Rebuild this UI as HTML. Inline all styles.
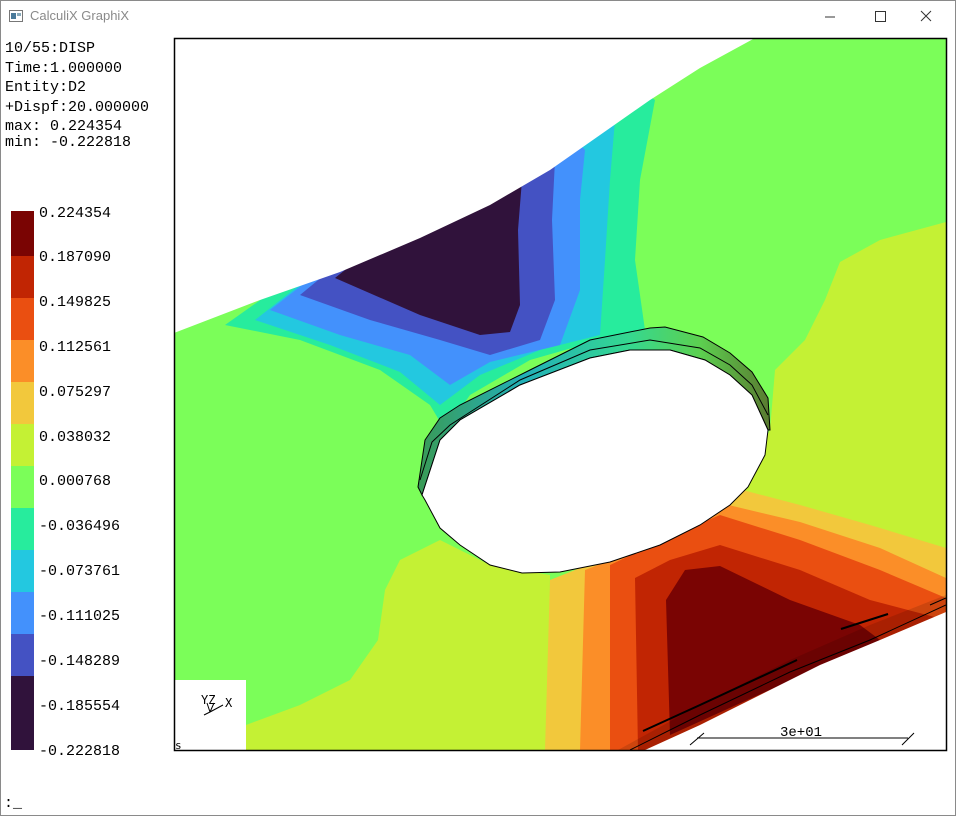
<!DOCTYPE html>
<html><head><meta charset="utf-8"><style>
html,body{margin:0;padding:0;background:#fff;}
body{width:956px;height:816px;position:relative;overflow:hidden;font-family:"Liberation Mono",monospace;}
.win{position:absolute;left:0;top:0;width:954px;height:814px;border:1px solid #8a8a8a;}
.title{position:absolute;left:30px;top:8px;font:13px "Liberation Sans",sans-serif;color:#8a8a8a;}
.t{position:absolute;font-size:15px;color:#000;white-space:pre;line-height:15px;}
</style></head><body>
<div class="win"></div>
<svg style="position:absolute;left:9px;top:10px" width="14" height="12"><rect x="0.5" y="0.5" width="13" height="11" fill="#fff" stroke="#777"/><rect x="2" y="3" width="5" height="6" fill="#4a7a9a"/><rect x="8" y="3" width="4" height="3" fill="#8ab"/></svg>
<div class="title">CalculiX GraphiX</div>
<svg style="position:absolute;left:820px;top:8px" width="120" height="18">
<line x1="5" y1="9" x2="15" y2="9" stroke="#333"/>
<rect x="55.5" y="3.5" width="10" height="10" fill="none" stroke="#333"/>
<path d="M101 3 L111 13 M111 3 L101 13" stroke="#333"/>
</svg>
<div class="t" style="left:5px;top:41px">10/55:DISP</div>
<div class="t" style="left:5px;top:61px">Time:1.000000</div>
<div class="t" style="left:5px;top:80px">Entity:D2</div>
<div class="t" style="left:5px;top:100px">+Dispf:20.000000</div>
<div class="t" style="left:5px;top:119px">max: 0.224354</div>
<div class="t" style="left:5px;top:135px">min: -0.222818</div>

<svg style="position:absolute;left:0;top:0" width="956" height="816">
<g>
<rect x="11" y="211" width="23" height="45" fill="#7a0403"/>
<rect x="11" y="256" width="23" height="42" fill="#c12503"/>
<rect x="11" y="298" width="23" height="42" fill="#ea4f11"/>
<rect x="11" y="340" width="23" height="42" fill="#fb8e28"/>
<rect x="11" y="382" width="23" height="42" fill="#f2c83c"/>
<rect x="11" y="424" width="23" height="42" fill="#c4f134"/>
<rect x="11" y="466" width="23" height="42" fill="#7bfe59"/>
<rect x="11" y="508" width="23" height="42" fill="#27ec9d"/>
<rect x="11" y="550" width="23" height="42" fill="#23c8e0"/>
<rect x="11" y="592" width="23" height="42" fill="#4391fc"/>
<rect x="11" y="634" width="23" height="42" fill="#4452c3"/>
<rect x="11" y="676" width="23" height="74" fill="#30123b"/>
</g>
<svg x="174" y="38" width="772" height="712" viewBox="174 38 772 712">
<rect x="174" y="38" width="772" height="712" fill="#7bfe59"/>
<path d="M946,222 L880,240 840,262 825,300 805,340 775,370 770,430 745,478 720,520 946,620 Z" fill="#c4f134"/>
<path d="M246,750 L246,725 300,705 350,680 378,640 385,590 400,560 440,540 490,565 550,575 548,750 Z" fill="#c4f134"/>
<path d="M225,325 L300,340 380,370 430,405 445,430 470,395 530,360 600,340 645,330 635,260 640,180 655,100 600,60 Z" fill="#27ec9d"/>
<path d="M255,320 L330,345 400,372 440,405 480,375 540,350 600,335 605,260 610,180 615,120 560,80 Z" fill="#23c8e0"/>
<path d="M270,310 L340,335 410,355 450,385 490,362 560,345 580,290 580,200 585,150 540,100 Z" fill="#4391fc"/>
<path d="M300,295 L370,320 440,340 490,355 540,340 555,300 552,220 555,160 500,130 Z" fill="#4452c3"/>
<path d="M335,278 L420,315 480,335 510,332 520,305 518,230 522,180 470,170 Z" fill="#30123b"/>
<path d="M174,38 L755,38 700,68 650,100 600,135 550,170 490,205 420,238 340,272 260,300 174,333 Z" fill="#fff"/>
<path d="M545,750 L550,580 600,560 680,520 735,488 800,505 870,525 946,548 946,750 Z" fill="#f2c83c"/>
<path d="M580,750 L585,570 650,545 720,503 800,522 880,548 946,578 946,750 Z" fill="#fb8e28"/>
<path d="M610,750 L610,565 680,532 720,515 800,540 880,570 946,598 946,750 Z" fill="#ea4f11"/>
<path d="M638,750 L635,578 670,560 720,545 800,570 870,600 946,620 946,750 Z" fill="#c12503"/>
<path d="M670,735 L666,600 685,570 720,566 790,600 860,625 880,640 Z" fill="#7a0403"/>
<path d="M618,750 L700,705 790,660 870,625 946,595 946,612 880,640 820,665 760,695 700,725 645,750 Z" fill="#000" opacity="0.12"/>
<path d="M645,750 L700,725 760,695 820,665 880,640 946,612 946,750 Z" fill="#fff"/>
<path d="M630,750 L700,715 790,672 870,640 946,605" fill="none" stroke="#000" stroke-width="1"/>
<path d="M643,731 L700,705 797,660" fill="none" stroke="#000" stroke-width="2"/>
<path d="M841,629 L888,614" fill="none" stroke="#000" stroke-width="2"/>
<path d="M946,598 L930,605" stroke="#000"/>
<defs><linearGradient id="rim" x1="0" x2="1" y1="0" y2="0"><stop offset="0" stop-color="#3a9a55"/><stop offset="0.3" stop-color="#22b0b8"/><stop offset="0.6" stop-color="#35d890"/><stop offset="0.8" stop-color="#5cd050"/><stop offset="1" stop-color="#5a7a30"/></linearGradient></defs>
<path d="M418,487 L425,440 440,418 460,405 530,370 590,340 650,328 665,327 703,337 730,353 752,372 768,398 770,430 768,430 752,395 730,375 705,360 670,350 630,350 590,358 520,385 460,420 440,440 422,495 Z" fill="url(#rim)" stroke="#000" stroke-width="1"/>
<path d="M420,480 L432,442 450,425 520,380 590,350 650,340 700,348 730,365 752,385 768,415" fill="none" stroke="#000" stroke-width="1"/>
<path d="M422,495 L440,440 460,420 520,385 590,358 630,350 670,350 705,360 730,375 752,395 768,430 765,455 748,487 730,505 700,525 660,545 610,562 560,572 522,573 490,565 460,545 440,528 425,500 Z" fill="#fff" stroke="#000" stroke-width="1"/>
<rect x="174" y="680" width="72" height="70" fill="#fff"/>
<path d="M210,712 L207,703 M210,712 L214,703 M210,712 L223,705 M204,715 L210,712" stroke="#000" fill="none"/>
<text x="201" y="704" font-size="12" font-family="DejaVu Sans Mono,monospace">YZ</text>
<text x="225" y="707" font-size="12" font-family="DejaVu Sans Mono,monospace">X</text>
<text x="175" y="749" font-size="11" font-family="DejaVu Sans Mono,monospace">s</text>
<path d="M690,745 L704,733 M697,738 L908,738 M902,745 L914,733" stroke="#000" fill="none"/>
<text x="780" y="736" font-size="14" font-family="Liberation Mono,monospace">3e+01</text>
</svg>
<rect x="174.5" y="38.5" width="772" height="712" fill="none" stroke="#000" stroke-width="1.5"/>
</svg>
<div class="t" style="left:39px;top:206px">0.224354</div>
<div class="t" style="left:39px;top:250px">0.187090</div>
<div class="t" style="left:39px;top:295px">0.149825</div>
<div class="t" style="left:39px;top:340px">0.112561</div>
<div class="t" style="left:39px;top:385px">0.075297</div>
<div class="t" style="left:39px;top:430px">0.038032</div>
<div class="t" style="left:39px;top:474px">0.000768</div>
<div class="t" style="left:39px;top:519px">-0.036496</div>
<div class="t" style="left:39px;top:564px">-0.073761</div>
<div class="t" style="left:39px;top:609px">-0.111025</div>
<div class="t" style="left:39px;top:654px">-0.148289</div>
<div class="t" style="left:39px;top:699px">-0.185554</div>
<div class="t" style="left:39px;top:744px">-0.222818</div>
<div class="t" style="left:4px;top:796px">:_</div>
</body></html>
